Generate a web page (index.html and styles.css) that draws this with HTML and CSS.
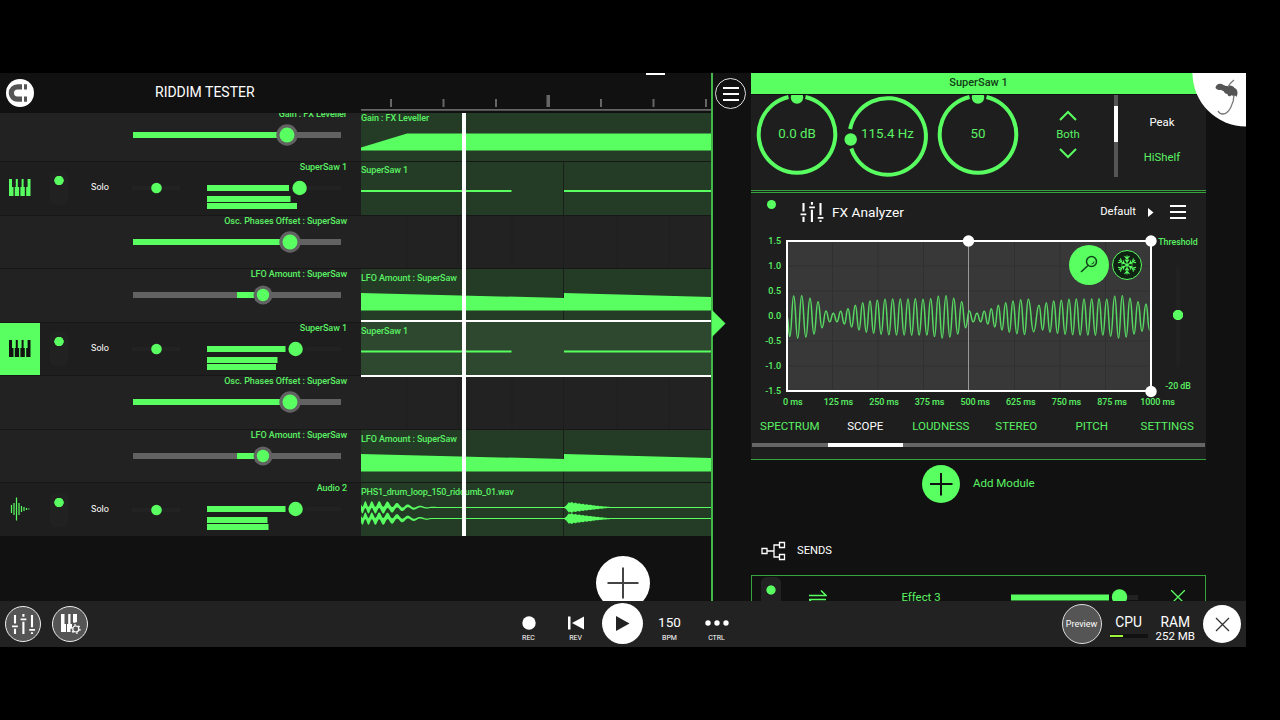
FILE: index.html
```
<!DOCTYPE html>
<html lang="en">
<head>
<meta charset="UTF-8">
<meta name="viewport" content="width=device-width, initial-scale=1.0">
<title>Riddim Tester</title>
<link rel="stylesheet" href="styles.css">
</head>
<body>
<svg class="symbols">
  <symbol id="keys" viewBox="0 0 22 17">
    <path d="M0 0h3v8h1.500v9H0zM5.800 8h1V0h2v8h1.300v9H5.800zM11.400 8h1.200V0h2v8h1.200v9h-4.400zM17.200 8h1.400V0H21.500v17h-4.300z"/>
  </symbol>
  <symbol id="faders" viewBox="0 0 24 22">
    <path d="M2 1h2.200v9H2zM2 15.500h2.200V21H2zM0 12h6v1.800H0zM10.800 0h2.200v3h-2.200zM10.800 8h2.200v13h-2.200zM9 4.800h6v1.800H9zM19.800 1h2.200v13h-2.200zM19.800 19h2.200v2h-2.200zM18 15.800h6v1.800h-6z"/>
  </symbol>
  <symbol id="saw-notes">
    <path d="M0 28h150.500v2H0zM203 28h147v2H203z"/>
  </symbol>
  <symbol id="lfo-shape">
    <path d="M0 24l203 5v-5l147 4v13.500H0z"/>
  </symbol>
</svg>

<div class="app">
  <div class="workspace">
    <section class="playlist">
      <header class="playlist-header">
        <div class="song">
          <button class="magnet">
            <svg width="28" height="28" viewBox="0 0 28 28">
              <path d="M16 5.200h-4.500a8.800 8.800 0 0 0 0 17.600H16v-5.300h-4.500a3.500 3.500 0 0 1 0-7H16zM18 5.200h3v5.300h-3zM18 17.500h3v5.300h-3z" fill="#555"/>
            </svg>
          </button>
          <h1>RIDDIM TESTER</h1>
        </div>
        <svg class="ruler" width="350" height="40">
          <path d="M285 0h19v2h-19z" fill="#fff"/>
          <path d="M29 26h2v8h-2zM81.500 26h2v8h-2zM134 26h2v8h-2zM185.500 22h3.500v12h-3.500zM239 26h2v8h-2zM291.500 26h2v8h-2zM344 26h2v8h-2z" fill="#666"/>
          <path d="M0 36h350v1.700H0z" fill="#666"/>
        </svg>
      </header>

      <div class="tracks">
        <div class="track automation">
          <div class="head">
            <div class="control">
              <span class="name">Gain : FX Leveller</span>
              <svg width="208" height="41">
                <path class="rail" d="M0 12h208v6H0z"/>
                <path d="M0 12h154v6H0z"/>
                <circle class="rim" cx="154" cy="15" r="10.700"/><circle cx="154" cy="15" r="7.500"/>
              </svg>
            </div>
          </div>
          <svg class="lane clip">
            <path d="M0 38.500L46 24.500h304v17H0z"/>
            <text x="0" y="11.500">Gain : FX Leveller</text>
          </svg>
        </div>

        <div class="track">
          <div class="head">
            <div class="kind"><svg width="22" height="17"><use href="#keys"/></svg></div>
            <div class="switch"></div>
            <span class="solo">Solo</span>
            <svg class="pan" width="48" height="12"><path d="M0 4h48v4H0z"/><circle cx="24.500" cy="6" r="5.300"/></svg>
            <div class="control">
              <span class="name">SuperSaw 1</span>
              <svg width="134" height="41">
                <path class="groove" d="M98 13h36v4H98z"/>
                <path d="M0 12h82v6H0zM0 23h83.500v6H0zM0 30h90v6H0z"/>
                <circle cx="92.600" cy="15" r="7.200"/>
              </svg>
            </div>
          </div>
          <svg class="lane clip">
            <path class="bar-line" d="M202.500 0v54"/>
            <use href="#saw-notes"/>
            <text x="0" y="11.300">SuperSaw 1</text>
          </svg>
        </div>

        <div class="track automation">
          <div class="head">
            <div class="control">
              <span class="name">Osc. Phases Offset : SuperSaw</span>
              <svg width="208" height="41">
                <path class="rail" d="M0 12h208v6H0z"/>
                <path d="M0 12h157v6H0z"/>
                <circle class="rim" cx="157" cy="15" r="10.700"/><circle cx="157" cy="15" r="7.500"/>
              </svg>
            </div>
          </div>
          <svg class="lane">
            <path class="beat-line" d="M46 0v54M97 0v54M151 0v54M256 0v54M308 0v54"/>
            <path class="bar-line" d="M202.500 0v54"/>
          </svg>
        </div>

        <div class="track automation">
          <div class="head">
            <div class="control">
              <span class="name">LFO Amount : SuperSaw</span>
              <svg width="208" height="41">
                <path class="rail" d="M0 12h208v6H0z"/>
                <path d="M104 12h26v6h-26z"/>
                <circle class="rim" cx="130" cy="15" r="9.500"/><circle cx="130" cy="15" r="6.200"/>
              </svg>
            </div>
          </div>
          <svg class="lane clip">
            <path class="bar-line" d="M202.500 0v54"/>
            <use href="#lfo-shape"/>
            <text x="0" y="11.500">LFO Amount : SuperSaw</text>
          </svg>
        </div>

        <div class="track selected">
          <div class="head">
            <div class="kind"><svg width="22" height="17"><use href="#keys"/></svg></div>
            <div class="switch"></div>
            <span class="solo">Solo</span>
            <svg class="pan" width="48" height="12"><path d="M0 4h48v4H0z"/><circle cx="24.500" cy="6" r="5.300"/></svg>
            <div class="control">
              <span class="name">SuperSaw 1</span>
              <svg width="134" height="41">
                <path class="groove" d="M98 13h36v4H98z"/>
                <path d="M0 12h78.500v6H0zM0 23h70.500v6H0zM0 30h69v6H0z"/>
                <circle cx="88.600" cy="15" r="7.200"/>
              </svg>
            </div>
          </div>
          <svg class="lane clip">
            <use href="#saw-notes" y="0.500"/>
            <text x="0" y="12.300">SuperSaw 1</text>
          </svg>
        </div>

        <div class="track automation">
          <div class="head">
            <div class="control">
              <span class="name">Osc. Phases Offset : SuperSaw</span>
              <svg width="208" height="41">
                <path class="rail" d="M0 12h208v6H0z"/>
                <path d="M0 12h157v6H0z"/>
                <circle class="rim" cx="157" cy="15" r="10.700"/><circle cx="157" cy="15" r="7.500"/>
              </svg>
            </div>
          </div>
          <svg class="lane">
            <path class="beat-line" d="M46 0v54M97 0v54M151 0v54M256 0v54M308 0v54"/>
            <path class="bar-line" d="M202.500 0v54"/>
          </svg>
        </div>

        <div class="track automation">
          <div class="head">
            <div class="control">
              <span class="name">LFO Amount : SuperSaw</span>
              <svg width="208" height="41">
                <path class="rail" d="M0 12h208v6H0z"/>
                <path d="M104 12h26v6h-26z"/>
                <circle class="rim" cx="130" cy="15" r="9.500"/><circle cx="130" cy="15" r="6.200"/>
              </svg>
            </div>
          </div>
          <svg class="lane clip">
            <path class="bar-line" d="M202.500 0v54"/>
            <use href="#lfo-shape"/>
            <text x="0" y="11.500">LFO Amount : SuperSaw</text>
          </svg>
        </div>

        <div class="track">
          <div class="head">
            <div class="kind">
              <svg width="20" height="24"><path d="M1.500 8v8M4 6v12M6.500 0.500v23M9 6v12M11.500 9v6M14 10v4M16.500 11v2M18.800 11.400v1.200" stroke="#59fe61" stroke-width="1.200"/></svg>
            </div>
            <div class="switch"></div>
            <span class="solo">Solo</span>
            <svg class="pan" width="48" height="12"><path d="M0 4h48v4H0z"/><circle cx="24.500" cy="6" r="5.300"/></svg>
            <div class="control">
              <span class="name">Audio 2</span>
              <svg width="134" height="41">
                <path class="groove" d="M98 13h36v4H98z"/>
                <path d="M0 12h78.500v6H0zM0 23h60.500v6H0zM0 30h61.500v6H0z"/>
                <circle cx="88.600" cy="15" r="7.200"/>
              </svg>
            </div>
          </div>
          <svg class="lane clip">
            <path class="bar-line" d="M202.500 0v54"/>
            <g id="drums"></g>
            <text class="file" x="0" y="11.500">PHS1_drum_loop_150_riddumb_01.wav</text>
          </svg>
        </div>
        <div class="playhead"></div>
      </div>

      <button class="add-track">
        <svg width="54" height="54"><path d="M11.500 27h31M27 11.500v31" stroke="#444" stroke-width="2"/></svg>
      </button>
    </section>

    <div class="gutter">
      <button class="menu">
        <svg width="16" height="14"><path d="M0 1h16M0 7h16M0 13h16" stroke="#fff" stroke-width="2"/></svg>
      </button>
      <svg class="arrow" width="14" height="27"><path d="M0 0l13.500 13.500L0 27z"/></svg>
    </div>

    <section class="rack">
      <div class="rack-title">SuperSaw 1</div>

      <div class="panel eq">
        <svg class="knob" width="90" height="94">
          <path d="M37.500 2a38.300 38.300 0 1 0 17 0" class="ring"/>
          <circle cx="46" cy="2.500" r="6.200"/>
          <text x="46" y="43">0.0 dB</text>
        </svg>
        <svg class="knob" width="90" height="94">
          <path d="M9.100 34A38.300 38.300 0 1 1 10.300 53.500" class="ring"/>
          <circle cx="9.700" cy="44.500" r="6.200"/>
          <text x="46.500" y="43">115.4 Hz</text>
        </svg>
        <svg class="knob" width="90" height="94">
          <path d="M38.500 2a38.300 38.300 0 1 0 17 0" class="ring"/>
          <circle cx="47" cy="2.500" r="6.200"/>
          <text x="47" y="43">50</text>
        </svg>
        <div class="stepper">
          <svg width="18" height="11"><path d="M1 10l8-8 8 8"/></svg>
          <span>Both</span>
          <svg width="18" height="11"><path d="M1 1l8 8 8-8"/></svg>
        </div>
        <div class="scrollbar"></div>
        <div class="shapes">
          <span class="active">Peak</span>
          <span>HiShelf</span>
        </div>
      </div>

      <div class="panel analyzer">
        <div class="analyzer-head">
          <i class="led"></i>
          <svg class="fader-icon" width="24" height="21"><use href="#faders"/></svg>
          <h2>FX Analyzer</h2>
          <span class="preset">Default</span>
          <svg width="6" height="9"><path d="M0 0l5.500 4.500L0 9z" fill="#fff"/></svg>
          <svg class="list" width="16" height="14"><path d="M0 1h16M0 7h16M0 13h16" stroke="#fff" stroke-width="1.800"/></svg>
        </div>

        <div class="scope-row">
          <div class="y-axis">
            <span>1.5</span><span>1.0</span><span>0.5</span><span>0.0</span><span>-0.5</span><span>-1.0</span><span>-1.5</span>
          </div>
          <div class="plot">
            <svg class="scope" width="366" height="152" viewBox="0 0 366 152">
              <path d="M1 1h364v150H1z" fill="#383838"/>
              <path d="M46.500 1v150M92 1v150M137.500 1v150M228.500 1v150M274 1v150M319.500 1v150M1 26h364M1 51h364M1 76h364M1 101h364M1 126h364" stroke="#303030"/>
              <path d="M182.500 1v150" stroke="#999"/>
              <path id="wave" transform="translate(1 76)"/>
              <path d="M1 1h364v150H1z" fill="none" stroke="#fff" stroke-width="2"/>
              <g fill="#fff"><circle cx="182.500" cy="1" r="5.700"/><circle cx="365" cy="1" r="5.700"/><circle cx="365" cy="151.500" r="5.700"/></g>
            </svg>
            <div class="scope-tools">
              <button class="zoom-tool">
                <svg width="20" height="20" stroke="#12431a" stroke-width="1.500"><circle cx="12.500" cy="6.500" r="5"/><path d="M9 10.500L2 17"/><path d="M12.500 9a2.500 2.500 0 0 0 2.500-2.500" stroke-width="1"/></svg>
              </button>
              <button class="freeze-tool">
                <svg width="22" height="22" viewBox="-11 -11 22 22">
                  <g id="arm"><path d="M0 0v-9.500M-2.500-9L0-6.200 2.500-9M-2-5.500L0-3.200l2-2.300"/></g>
                  <use href="#arm" transform="rotate(60)"/><use href="#arm" transform="rotate(120)"/><use href="#arm" transform="rotate(180)"/><use href="#arm" transform="rotate(240)"/><use href="#arm" transform="rotate(300)"/>
                </svg>
              </button>
            </div>
          </div>
          <div class="threshold">
            <span>Threshold</span>
            <div class="threshold-slider"></div>
            <span>-20 dB</span>
          </div>
        </div>
        <div class="x-axis">
          <span>0 ms</span><span>125 ms</span><span>250 ms</span><span>375 ms</span><span>500 ms</span><span>625 ms</span><span>750 ms</span><span>875 ms</span><span>1000 ms</span>
        </div>

        <nav class="tabs">
          <a>SPECTRUM</a>
          <a class="active">SCOPE</a>
          <a>LOUDNESS</a>
          <a>STEREO</a>
          <a>PITCH</a>
          <a>SETTINGS</a>
        </nav>
      </div>

      <div class="add-module">
        <svg width="38" height="38"><circle cx="19" cy="19" r="19"/><path d="M8 19h22.500M19 8v22.500" stroke="#111" stroke-width="2"/></svg>
        <span>Add Module</span>
      </div>

      <div class="sends">
        <svg width="25" height="20" stroke="#fff" stroke-width="1.300"><path d="M1 7.500h5v5H1zM18.500 1.500h5v5h-5zM18.500 13.500h5v5h-5zM6 10h7M18.500 4H13v12h5.500"/></svg>
        <span>SENDS</span>
      </div>

      <div class="send-slot">
        <i class="led boxed"></i>
        <svg class="route" width="18" height="16" stroke="#59fe61" stroke-width="1.500"><path d="M0 6.500h17l-5-5M17 10.500H0l5 5"/></svg>
        <span>Effect 3</span>
        <svg class="send-level" width="128" height="18"><path d="M110 7h17v5h-17z" fill="#222"/><path d="M0 6.500h98v6H0z"/><circle cx="108.500" cy="9" r="7.700"/></svg>
        <svg class="remove" width="14" height="14"><path d="M0 0l14 14M14 0L0 14" stroke="#59fe61" stroke-width="1.300"/></svg>
      </div>
    </section>

    <aside class="logo">
      <svg width="54" height="54">
        <circle cx="54" cy="0" r="53.500" fill="#fff"/>
        <path d="M23.500 15c0-3 4-6 8-3 2 1 3 1 4 1 3-1 6 0 7 2 3 1 4 5 2 9-1-2-2-2-3 0-1-2-2-2-3-1-2 1-3-1-3-2-2 0-3-1-4-3-2 0-2-2-3-1-2 0-3 0-5-2z" fill="#555"/>
        <path d="M42 7c-4 3-5 5-6 7M42 22c0 8-5 19-11 19-3 0-4-1-5-3" fill="none" stroke="#777" stroke-width="1.300"/>
      </svg>
    </aside>
  </div>

  <footer class="transport">
    <div class="left-tools">
      <button class="round"><svg width="23" height="21"><use href="#faders"/></svg></button>
      <button class="round">
        <svg width="22" height="22" viewBox="0 0 22 22">
          <path d="M2 1h3.500v10H7v8H2zM8 11h1.200V1h2.300v10H13v3l-1.500 2V19H8zM14 9V1h4v8l-3 1z" fill="#fff"/>
          <g fill="none" stroke="#fff">
            <circle cx="16.800" cy="16" r="3" stroke-width="1.200"/>
            <circle cx="16.800" cy="16" r="4.200" stroke-width="1.300" stroke-dasharray="1.800 2.600"/>
          </g>
        </svg>
      </button>
    </div>

    <div class="playback">
      <div class="action"><svg width="24" height="20"><circle cx="12" cy="10" r="6.700" fill="#fff"/></svg><small>REC</small></div>
      <div class="action"><svg width="24" height="20"><path d="M4 3.500h2.500v13H4zM20 3.500v13L8 10z" fill="#fff"/></svg><small>REV</small></div>
      <button class="play"><svg width="14" height="15"><path d="M0 0l13.500 7.500L0 15z" fill="#222"/></svg></button>
      <div class="action"><b>150</b><small>BPM</small></div>
      <div class="action"><svg width="24" height="20"><g fill="#fff"><circle cx="3" cy="10" r="2.700"/><circle cx="12" cy="10" r="2.700"/><circle cx="21" cy="10" r="2.700"/></g></svg><small>CTRL</small></div>
    </div>

    <div class="status">
      <button class="preview">Preview</button>
      <div class="cpu"><span>CPU</span><div class="load"><i></i></div></div>
      <div class="ram"><span>RAM</span><small>252 MB</small></div>
      <button class="close"><svg width="15" height="15"><path d="M1 1l13 13M14 1L1 14" stroke="#333" stroke-width="1.300"/></svg></button>
    </div>
  </footer>
</div>

<script>
  // [x, height] of every crest in the scope
  const CRESTS = [
    [6.7, 20], [14.7, 20.3], [23, 17.7], [31, 14.3], [39, 5], [46.3, 2.7], [53.7, 4.7],
    [61, 7.3], [68.3, 10.7], [75.7, 13.3], [83, 15], [90.3, 15.7], [98, 16.7], [105.7, 17],
    [113.3, 17], [121, 17], [128.3, 17.3], [136, 16.7], [143.7, 17.3], [151.3, 19.7],
    [159, 20.3], [166.7, 17.7], [174.7, 14.3], [182.3, 5], [190, 2.7], [197.3, 4.7],
    [204.3, 7.3], [211.3, 10.7], [218.7, 13.3], [226, 15], [233.7, 16.3], [241.3, 16.7],
    [252, 10.7], [259.3, 13.3], [266.7, 15], [274.3, 15.7], [282, 16.7], [289.3, 17],
    [297, 17], [304.7, 17], [312, 17.3], [319.7, 16.7], [327.7, 19.7], [335.3, 20.3],
    [343, 17.7], [351, 14.3], [359, 12]
  ];

  function wavePath() {
    let d = 'M0 0';
    let x = 0, y = 0;
    const curve = (nx, ny) => {
      const mid = (x + nx) / 2;
      d += `C${mid} ${y} ${mid} ${ny} ${nx} ${ny}`;
      x = nx;
      y = ny;
    };
    curve(2.8, 20.5);
    CRESTS.forEach(([cx, h], i) => {
      curve(cx, -h);
      const next = CRESTS[i + 1] || [366, h];
      curve((cx + next[0]) / 2, (h + next[1]) / 2 + 2);
    });
    return d;
  }

  // One channel of the drum loop: a wobble that slows and decays, then a short noisy hit
  function drumPath(cy) {
    let top = '', bottom = '';
    for (let x = 0; x <= 76; x += 0.5) {
      const fade = x < 25 ? 1 : Math.max(0, 1 - (x - 25) / 50);
      const phase = Math.log(1 + 0.13 * x / 5.5) / 0.13 * 2 * Math.PI;
      const mid = cy + Math.sin(phase) * 2.8 * fade;
      const half = 0.5 + 2.9 * fade * fade;
      top += `L${x} ${mid - half}`;
      bottom = `L${x} ${mid + half}` + bottom;
    }
    let hitTop = '', hitBottom = '';
    for (let x = 203; x <= 256; x += 1) {
      const t = (x - 203) / 53;
      const size = (x < 208 ? (x - 203) / 5 : Math.pow(1 - t, 1.3) * 1.25) * 4.8;
      const jitter = 0.8 + 0.3 * Math.abs(Math.sin(x * 2.3));
      hitTop += `L${x} ${cy - size * jitter}`;
      hitBottom = `L${x} ${cy + size * jitter}` + hitBottom;
    }
    return `M0 ${cy}${top}${bottom}ZM203 ${cy}${hitTop}${hitBottom}ZM70 ${cy - 0.5}h280v1H70z`;
  }

  document.getElementById('wave').setAttribute('d', wavePath());
  document.getElementById('drums').innerHTML =
    `<path d="${drumPath(24.4)}"/><path d="${drumPath(35.6)}"/>`;
</script>
</body>
</html>
```
FILE: styles.css
```
:root {
  --green: #59fe61;
  --green-text: #5bf164;
  --line: #36a33c;
  --row: 53.57px;
}

* {
  box-sizing: border-box;
}

body {
  margin: 0;
  padding-top: 73px;
  background: #000;
  color: #fff;
  font-family: Roboto, sans-serif;
  height: 720px;
  overflow: hidden;
}

svg {
  display: block;
  fill: var(--green);
  flex-shrink: 0;
}

button {
  border: none;
  padding: 0;
  border-radius: 50%;
  display: flex;
  align-items: center;
  justify-content: center;
  flex-shrink: 0;
  font-family: inherit;
}

h1, h2 {
  margin: 0;
  font-weight: 400;
}

.symbols {
  width: 0;
  height: 0;
  position: absolute;
}

.app {
  width: 1246px;
}

.workspace {
  display: flex;
  height: 528px;
  background: #111;
  overflow: hidden;
}

/* Playlist */
.playlist {
  width: 713px;
  border-right: 2px solid #41b847;
}

.playlist-header {
  display: flex;
  height: 40px;
}

.song {
  width: 361px;
  display: flex;
  align-items: center;
  padding-left: 6px;
}

.magnet {
  width: 28px;
  height: 28px;
  background: #fff;
}

h1 {
  font-size: 14px;
  margin: -3px 0 0 121px;
}

.tracks {
  position: relative;
  height: 423px;
  overflow: hidden;
  display: flex;
  flex-direction: column;
  justify-content: flex-end;
}

.track {
  display: flex;
  height: var(--row);
  flex-shrink: 0;
  background: #1e1e1e;
  border-top: 1px solid #171717;
}

.track.automation {
  background: #222;
}

.head {
  width: 361px;
  display: flex;
  align-items: center;
}

.kind {
  width: 40px;
  height: 100%;
  display: flex;
  align-items: center;
  justify-content: center;
  padding: 0 1px 1px 0;
}

.selected .kind {
  background: var(--green);
}

.selected .kind svg {
  fill: #111;
}

.switch {
  width: 18px;
  height: 34px;
  margin-left: 10px;
  border-radius: 6px;
  background: #212121 radial-gradient(circle at 9px 9.5px, var(--green) 4.4px, transparent 5px);
}

.solo {
  width: 64px;
  margin-top: -2px;
  text-align: center;
  font-size: 9px;
}

.pan path,
.groove {
  fill: #222;
}

.control {
  flex: 1;
  height: 100%;
  padding-right: 14px;
  display: flex;
  flex-direction: column;
  align-items: flex-end;
}

.control svg {
  margin-right: 6px;
}

.name {
  font-size: 9px;
  font-weight: 500;
  line-height: 11px;
  letter-spacing: -0.06px;
  color: var(--green-text);
}

.rail,
.rim {
  fill: #626262;
}

.lane {
  width: 350px;
  height: 52.5px;
}

.lane text {
  font-size: 9px;
  font-weight: 500;
  letter-spacing: -0.08px;
  fill: var(--green-text);
}

.lane .file {
  letter-spacing: -0.2px;
}

.clip {
  background: #243c26;
}

.selected .clip {
  position: relative;
  margin-top: -1px;
  height: 53px;
  background: #2d482f;
  box-shadow: 0 -2px #fff, 0 2px #fff;
}

.bar-line {
  stroke: #1a1f1a;
}

.beat-line {
  stroke: #1e1e1e;
}

.playhead {
  position: absolute;
  left: 462px;
  top: 0;
  width: 3.5px;
  height: 423px;
  background: #fff;
}

.add-track {
  width: 54px;
  height: 54px;
  margin: 20px 0 0 596px;
  background: #fff;
}

.gutter {
  width: 38px;
  padding-top: 5px;
}

.menu {
  width: 31px;
  height: 31px;
  margin-left: 2px;
  border: 1px solid #ddd;
  background: #111;
}

.arrow {
  margin: 201px 0 0 -1px;
}

/* Rack */
.rack {
  width: 455px;
  display: flex;
  flex-direction: column;
  color: var(--green-text);
}

.rack > * {
  flex-shrink: 0;
}

.rack-title {
  height: 21px;
  line-height: 19px;
  background: var(--green);
  color: #123d16;
  text-align: center;
  font-size: 11px;
  font-weight: 500;
}

.panel {
  background: #1e1e1e;
}

.eq {
  height: 99px;
  display: flex;
  border-top: 1px solid #111;
  border-bottom: 3px double var(--line);
}

.knob .ring {
  fill: none;
  stroke: var(--green);
  stroke-width: 4;
}

.knob text {
  font-size: 13.3px;
  text-anchor: middle;
  fill: var(--green-text);
}

.stepper {
  width: 93px;
  display: flex;
  flex-direction: column;
  align-items: center;
  padding: 15px 0 0 1px;
  font-size: 11.3px;
  line-height: 27px;
}

.stepper svg path {
  fill: none;
  stroke: var(--green);
  stroke-width: 2;
}

.scrollbar {
  width: 4px;
  height: 82px;
  background: linear-gradient(#555 11px, #fff 11px, #fff 47px, #555 47px);
}

.shapes {
  flex: 1;
  display: flex;
  flex-direction: column;
  align-items: center;
  gap: 21px;
  padding-top: 21px;
  font-size: 11.3px;
  line-height: 14px;
}

.active {
  color: #fff;
}

.analyzer {
  height: 267px;
  border-bottom: 1px solid var(--line);
}

.analyzer-head {
  display: flex;
  align-items: center;
  height: 38px;
  padding-right: 20px;
  color: #fff;
}

.led {
  width: 9px;
  height: 9px;
  border-radius: 50%;
  background: var(--green);
  margin: -15px 0 0 16px;
}

.fader-icon {
  fill: #fff;
  margin-left: 24px;
}

h2 {
  flex: 1;
  margin: -1px 0 0 8px;
  font-size: 13.7px;
}

.preset {
  font-size: 11.2px;
  margin: -1px 12px 0 0;
}

.list {
  margin-left: 16px;
}

.scope-row {
  display: flex;
  margin-top: 9px;
  height: 152px;
}

.y-axis {
  width: 35px;
  margin: -5px 0;
  padding-right: 5px;
  display: flex;
  flex-direction: column;
  justify-content: space-between;
  text-align: right;
  font-size: 9px;
  font-weight: 500;
  line-height: 12px;
}

.plot {
  position: relative;
  width: 366px;
}

.scope {
  overflow: visible;
}

#wave {
  fill: none;
  stroke: #58d863;
  stroke-width: 1.5;
}

.scope-tools {
  position: absolute;
  top: 5px;
  right: 10px;
  display: flex;
  align-items: center;
  gap: 3px;
}

.zoom-tool {
  width: 40px;
  height: 40px;
  background: var(--green);
}

.freeze-tool {
  width: 30px;
  height: 30px;
  border: 1px solid var(--green);
  background: #102313;
}

.zoom-tool svg,
.sends svg,
.route {
  fill: none;
}

.freeze-tool path {
  fill: none;
  stroke: var(--green);
  stroke-width: 1.1;
}

.threshold {
  flex: 1;
  display: flex;
  flex-direction: column;
  align-items: center;
  font-size: 8.8px;
  font-weight: 500;
  line-height: 12px;
  margin-top: -4px;
  padding-right: 2px;
}

.threshold-slider {
  width: 12px;
  height: 100px;
  margin: 19px 0 13px;
  background: radial-gradient(circle at 6px 48px, var(--green) 4.8px, transparent 5.5px),
    linear-gradient(90deg, transparent 4px, #212121 4px, #212121 8px, transparent 8px);
}

.x-axis {
  display: grid;
  grid-template-columns: repeat(9, 45.6px);
  margin: 4px 0 0 19px;
  text-align: center;
  font-size: 9px;
  font-weight: 500;
  line-height: 12px;
  letter-spacing: -0.1px;
}

.tabs {
  display: flex;
  margin: 12px 1px 0;
}

.tabs a {
  flex: 1 0 0;
  height: 27px;
  border-bottom: 4px solid #666;
  text-align: center;
  font-size: 11.5px;
  line-height: 12px;
}

.tabs .active {
  border-color: #fff;
}

.add-module {
  display: flex;
  align-items: center;
  gap: 13px;
  height: 48px;
  padding-left: 171px;
  font-size: 11.5px;
}

.sends {
  display: flex;
  align-items: center;
  gap: 11px;
  margin-top: 33px;
  padding-left: 10px;
  height: 20px;
  font-size: 11.2px;
  color: #fff;
}

.add-module span {
  margin-top: -3px;
}

.sends span {
  margin-top: -2px;
}

.send-slot {
  display: flex;
  align-items: center;
  margin-top: 14px;
  height: 54px;
  padding: 0 20px 10px 6px;
  border: 1px solid var(--line);
  font-size: 11.4px;
}

.led.boxed {
  width: 20px;
  height: 40px;
  margin: 0 28px 0 3px;
  border-radius: 6px;
  background: #222 radial-gradient(circle at 10px 13px, var(--green) 4.2px, transparent 5px);
}

.send-slot span {
  flex: 1;
  padding-left: 4px;
  margin-top: -1px;
  text-align: center;
}

.remove {
  margin-left: 32px;
}

.logo {
  width: 54px;
  margin-left: -14px;
}

/* Transport */
.transport {
  display: grid;
  grid-template-columns: 505px 235px 1fr;
  align-items: center;
  height: 46px;
  background: #222;
}

.left-tools {
  display: flex;
  gap: 11px;
  padding-left: 5px;
}

.round {
  width: 36px;
  height: 36px;
  border: 1.5px solid #eee;
  background: #555;
}

.round svg {
  fill: #fff;
}

.playback {
  display: grid;
  grid-template-columns: repeat(5, 47px);
  justify-items: center;
  align-items: center;
}

.action {
  display: flex;
  flex-direction: column;
  align-items: center;
  padding-top: 8px;
}

.action small {
  margin-top: 1px;
  font-size: 7px;
  line-height: 9px;
}

.action b {
  font-weight: 400;
  font-size: 13.5px;
  line-height: 18px;
  padding-bottom: 2px;
}

.play {
  width: 41px;
  height: 41px;
  margin-top: -1px;
  background: #fff;
}

.status {
  display: flex;
  align-items: center;
  justify-content: flex-end;
  padding-right: 5px;
}

.preview {
  width: 40px;
  height: 40px;
  border: 1.5px solid #ddd;
  background: #555;
  color: #fff;
  font-size: 9px;
}

.cpu,
.ram {
  font-size: 13.8px;
  line-height: 14px;
  text-align: center;
}

.cpu {
  width: 38px;
  margin: 0 8px;
  padding-top: 5px;
}

.load {
  height: 4px;
  margin-top: 5px;
  background: #111;
  padding: 1px 0;
}

.load i {
  display: block;
  width: 13px;
  height: 2px;
  background: #9ff53c;
}

.ram {
  padding-top: 10px;
}

.ram small {
  display: block;
  font-size: 11.5px;
}

.close {
  width: 38px;
  height: 38px;
  margin-left: 8px;
  background: #fff;
}
```
